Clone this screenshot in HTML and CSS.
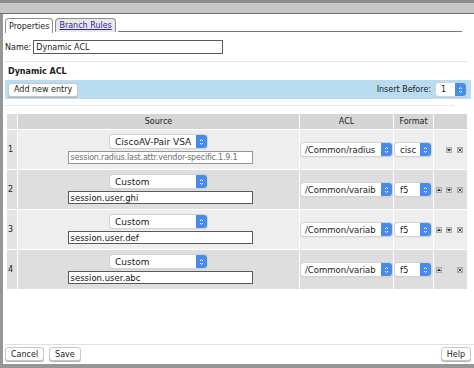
FILE: index.html
```html
<!DOCTYPE html>
<html>
    <head>
        <title>Dynamic ACL</title>
        <link rel="stylesheet" href="styles.css">
    </head>
    <body>
        <div class="topbar"></div>
        <div class="frame">
            <div class="tabs">
                <span class="tab active">Properties</span>
                <span class="tab"><a href="#">Branch Rules</a></span>
                <span class="tab-line"></span>
            </div>
            <div class="name-row">
                <label>Name:</label>
                <span class="textbox name-box">Dynamic ACL</span>
            </div>
            <hr class="sep">
            <h2>Dynamic ACL</h2>
            <div class="toolbar">
                <button class="btn">Add new entry</button>
                <div class="insert">
                    <span>Insert Before:</span>
                    <span class="sel sel-small"><span class="sel-text">1</span><span class="step"><svg width="5" height="8" viewBox="0 0 5 8"><path d="M1 3 L2.5 1.5 L4 3 M1 5 L2.5 6.5 L4 5" fill="none" stroke="#fff" stroke-width="1"/></svg></span></span>
                </div>
            </div>
            <div class="dots"></div>
            <table class="grid">
                <thead>
                    <tr>
                        <th class="num"></th>
                        <th class="src">Source</th>
                        <th class="acl">ACL</th>
                        <th class="fmt">Format</th>
                        <th class="act"></th>
                    </tr>
                </thead>
                <tbody id="rows"></tbody>
            </table>
            <div class="spacer"></div>
            <div class="footer">
                <button class="btn">Cancel</button>
                <button class="btn">Save</button>
                <span class="grow"></span>
                <button class="btn">Help</button>
            </div>
        </div>
        <div class="bottombar"></div>
        <script>
            const entries = [
                { src: "CiscoAV-Pair VSA", value: "session.radius.last.attr.vendor-specific.1.9.1", acl: "/Common/radius", fmt: "cisc", up: false, down: true, faded: true },
                { src: "Custom", value: "session.user.ghi", acl: "/Common/varaib", fmt: "f5", up: true, down: true },
                { src: "Custom", value: "session.user.def", acl: "/Common/variab", fmt: "f5", up: true, down: true },
                { src: "Custom", value: "session.user.abc", acl: "/Common/variab", fmt: "f5", up: true, down: false }
            ];
            const stepper = '<span class="step"><svg width="5" height="8" viewBox="0 0 5 8"><path d="M1 3 L2.5 1.5 L4 3 M1 5 L2.5 6.5 L4 5" fill="none" stroke="#fff" stroke-width="1"/></svg></span>';
            const upIcon = '<svg width="4" height="4" viewBox="0 0 4 4"><path d="M0 3 L2 0.8 L4 3 Z" fill="#222"/></svg>';
            const downIcon = '<svg width="4" height="4" viewBox="0 0 4 4"><path d="M0 1 L2 3.2 L4 1 Z" fill="#222"/></svg>';
            const xIcon = '<svg width="4" height="4" viewBox="0 0 4 4"><path d="M0.5 0.5 L3.5 3.5 M3.5 0.5 L0.5 3.5" stroke="#333" stroke-width="0.9"/></svg>';
            const rowsElem = document.querySelector("#rows");

            entries.forEach(function(e, i){
                rowsElem.innerHTML += `
                <tr>
                    <td class="num">${i + 1}</td>
                    <td class="src">
                        <div class="src-box">
                            <span class="sel sel-src"><span class="sel-text">${e.src}</span>${stepper}</span>
                            <span class="textbox val ${e.faded ? "faded" : ""}">${e.value}</span>
                        </div>
                    </td>
                    <td class="acl"><span class="sel sel-acl"><span class="sel-text">${e.acl}</span>${stepper}</span></td>
                    <td class="fmt"><span class="sel sel-fmt"><span class="sel-text">${e.fmt}</span>${stepper}</span></td>
                    <td class="act">
                        <div class="icons">
                            <span class="icon ${e.up ? "" : "hidden"}">${upIcon}</span>
                            <span class="icon ${e.down ? "" : "hidden"}">${downIcon}</span>
                            <span class="icon close">${xIcon}</span>
                        </div>
                    </td>
                </tr>`;
            });
        </script>
    </body>
</html>
```

FILE: styles.css
```css
html, body{
    margin: 0;
    height: 368px;
    overflow: hidden;
}
body{
    display: flex;
    flex-direction: column;
    font-family: "DejaVu Sans", sans-serif;
    font-size: 8px;
    color: #222;
    background-color: white;
}
.topbar{
    height: 10px;
    background-color: rgb(198, 198, 198);
    border-top: 3px solid rgb(140, 140, 140);
    border-bottom: 1px solid rgb(110, 110, 110);
}
.bottombar{
    height: 4px;
    background-color: rgb(150, 150, 150);
}
.frame{
    flex: 1;
    display: flex;
    flex-direction: column;
    border-left: 3px solid rgb(150, 150, 150);
    padding-left: 2px;
}
.tabs{
    display: flex;
    align-items: flex-end;
    margin-top: 3px;
    height: 15px;
}
.tab{
    height: 13px;
    padding: 0 3px;
    margin-right: 2px;
    display: flex;
    align-items: center;
    border: 1px solid rgb(140, 140, 140);
    border-bottom: none;
    border-radius: 4px 4px 0 0;
    background-color: rgb(232, 232, 232);
}
.tab.active{
    background-color: white;
    height: 14px;
    margin-bottom: -1px;
    position: relative;
}
.tab a{
    color: rgb(50, 40, 150);
    font-size: 8px;
}
.tab-line{
    flex: 1;
    margin-right: 12px;
    border-bottom: 1px solid rgb(120, 120, 120);
}
.name-row{
    display: flex;
    align-items: center;
    margin-top: 8px;
    height: 14px;
}
.name-row label{
    margin-right: 2px;
}
.textbox{
    display: flex;
    align-items: center;
    box-sizing: border-box;
    border: 1px solid rgb(90, 90, 90);
    background-color: white;
    padding-left: 2px;
    white-space: nowrap;
    overflow: hidden;
}
.name-box{
    width: 190px;
    height: 14px;
}
.sep{
    border: none;
    border-top: 1px solid rgb(228, 228, 228);
    margin: 7px 7px 0 0;
}
h2{
    font-size: 8px;
    font-weight: bold;
    margin: 5px 0 0 3px;
    height: 10px;
    line-height: 10px;
}
.toolbar{
    margin: 3px 3px 0 0;
    height: 19px;
    background-color: rgb(185, 220, 240);
    display: flex;
    align-items: center;
    justify-content: space-between;
    padding: 0 5px 0 3px;
}
.btn{
    font-family: "DejaVu Sans", sans-serif;
    font-size: 8px;
    color: #222;
    height: 14px;
    padding: 0 5px;
    background-color: white;
    border: 1px solid rgb(200, 200, 200);
    border-radius: 3px;
    box-shadow: 0 1px 0 rgb(180, 180, 180);
}
.insert{
    display: flex;
    align-items: center;
    gap: 5px;
}
.sel{
    display: inline-flex;
    align-items: center;
    box-sizing: border-box;
    height: 13px;
    background-color: white;
    border-radius: 3px;
    box-shadow: 0 0 0 1px rgb(210, 210, 210), 0 1px 1px rgb(170, 170, 170);
    overflow: hidden;
    font-size: 9px;
}
.sel-text{
    flex: 1;
    padding-left: 5px;
    white-space: nowrap;
    overflow: hidden;
}
.step{
    width: 11px;
    height: 13px;
    background-color: rgb(70, 140, 235);
    display: flex;
    align-items: center;
    justify-content: center;
}
.sel-small{
    width: 30px;
    font-size: 8px;
}
.dots{
    margin: 6px 20px 0 0;
    border-top: 1px dotted rgb(215, 215, 215);
}
.grid{
    margin-top: 7px;
    margin-left: 1px;
    width: 462px;
    border-spacing: 1px;
    background-color: white;
    table-layout: fixed;
}
.grid th{
    height: 15px;
    font-weight: normal;
    background-color: rgb(213, 213, 213);
    padding: 0;
}
.grid td{
    height: 39px;
    padding: 0;
    background-color: rgb(238, 238, 238);
}
.grid tbody tr:nth-child(even) td{
    background-color: rgb(222, 222, 222);
}
.grid th.num, .grid td.num{
    width: 9px;
    background-color: rgb(220, 220, 220);
    text-align: left;
    padding-left: 1px;
}
.grid tbody tr:nth-child(odd) td.num{
    background-color: rgb(228, 228, 228);
}
.grid .src{
    width: 281px;
}
.grid .acl{
    width: 93px;
}
.grid .fmt{
    width: 39px;
}
.src-box{
    display: flex;
    flex-direction: column;
    align-items: center;
    gap: 3px;
}
.sel-src{
    width: 97px;
}
.val{
    width: 185px;
    height: 13px;
    margin-left: 3px;
    color: #111;
    font-size: 8.5px;
}
.val.faded{
    color: rgb(110, 110, 110);
    border-color: rgb(150, 150, 150);
    font-size: 8px;
    letter-spacing: -0.2px;
}
.sel-acl{
    width: 91px;
    margin-left: 1px;
    font-size: 8.5px;
}
.sel-acl .sel-text{
    padding-left: 4px;
}
.sel-fmt{
    width: 36px;
    margin-left: 1px;
    font-size: 8.5px;
}
.icons{
    display: flex;
    align-items: center;
    padding-left: 2px;
}
.icon{
    display: flex;
    align-items: center;
    justify-content: center;
    box-sizing: border-box;
    width: 6px;
    height: 6px;
    background-color: rgb(215, 215, 215);
    border: 1px solid rgb(170, 170, 170);
    margin-right: 4px;
}
.icon.close{
    margin-left: 1px;
}
.hidden{
    visibility: hidden;
}
.spacer{
    flex: 1;
}
.footer{
    border-top: 1px solid rgb(225, 225, 225);
    display: flex;
    align-items: center;
    gap: 5px;
    padding: 2px 3px 3px 0;
}
.grow{
    flex: 1;
}
```
